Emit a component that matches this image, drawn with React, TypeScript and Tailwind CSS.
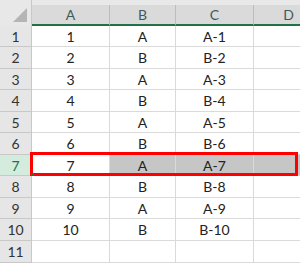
import React from "react";

const cols = [
  { key: "A", w: "w-[78px]" },
  { key: "B", w: "w-[66px]" },
  { key: "C", w: "w-[78px]" },
  { key: "D", w: "w-[70px]" },
];

const rows = [
  ["1", "A", "A-1"],
  ["2", "B", "B-2"],
  ["3", "A", "A-3"],
  ["4", "B", "B-4"],
  ["5", "A", "A-5"],
  ["6", "B", "B-6"],
  ["7", "A", "A-7"],
  ["8", "B", "B-8"],
  ["9", "A", "A-9"],
  ["10", "B", "B-10"],
  ["", "", ""],
];

const heights = [
  "h-[21px]", "h-[22px]", "h-[21px]", "h-[22px]", "h-[21px]", "h-[22px]",
  "h-[21px]", "h-[22px]", "h-[21px]", "h-[22px]", "h-[22px]",
];

export default function App() {
  return (
    <div className="relative h-[264px] w-[300px] overflow-hidden bg-white font-['Lato','Noto_Sans',sans-serif] text-[14px] text-[#222]">
      {/* column headers */}
      <div className="flex h-[26px] bg-[#e8e8e8]">
        <div className="relative w-[32px] shrink-0 border-r border-[#c8c8c8]">
          <div className="absolute bottom-[4px] right-[4px] h-0 w-0 border-b-[14px] border-l-[14px] border-b-[#b5b5b5] border-l-transparent" />
        </div>
        {cols.map((c) => (
          <div
            key={c.key}
            className={`${c.w} mt-[5px] flex shrink-0 items-center justify-center border-b-2 border-r border-b-[#217346] border-r-[#bdbdbd] bg-[#dadada] text-[#3f5a5a]`}
          >
            {c.key}
          </div>
        ))}
      </div>

      {rows.map((r, i) => {
        const sel = i === 6;
        return (
          <div key={i} className={`flex ${heights[i]}`}>
            <div
              className={`flex w-[32px] shrink-0 items-center justify-center border-b border-r border-[#c8c8c8] ${
                sel ? "bg-[#d3ecde] text-[#217346]" : "bg-[#e6e6e6] text-[#333]"
              }`}
            >
              {i + 1}
            </div>
            <div className="flex w-[78px] shrink-0 items-center justify-center border-b border-r border-[#dadada]">
              {r[0]}
            </div>
            <div
              className={`flex w-[66px] shrink-0 items-center justify-center border-b border-r border-[#dadada] ${
                sel ? "bg-[#c6c6c6]" : ""
              }`}
            >
              {r[1]}
            </div>
            <div
              className={`flex w-[78px] shrink-0 items-center justify-center border-b border-r border-[#dadada] ${
                sel ? "bg-[#c6c6c6]" : ""
              }`}
            >
              {r[2]}
            </div>
            <div
              className={`w-[70px] shrink-0 border-b border-r border-[#dadada] ${
                sel ? "bg-[#c6c6c6]" : ""
              }`}
            />
          </div>
        );
      })}

      {/* highlight box */}
      <div className="absolute left-[30px] top-[152px] h-[24px] w-[268px] border-[3px] border-[#ff0000]" />
      <div className="absolute left-[31px] top-[173px] h-[3px] w-[3px] bg-[#217346]" />
    </div>
  );
}
